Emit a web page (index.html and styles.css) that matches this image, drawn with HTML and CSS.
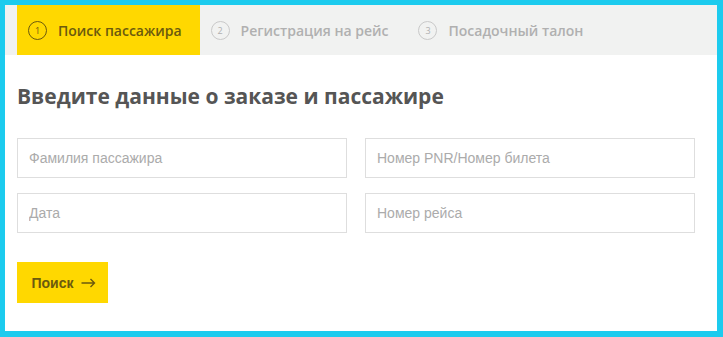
FILE: index.html
```html
<!DOCTYPE html>
<html lang="ru">
<head>
    <meta charset="UTF-8">
    <title>Регистрация на рейс</title>
    <link rel="stylesheet" href="styles.css">
</head>
<body>
    <div class="frame">
        <ul class="steps">
            <li class="step active"><span class="num">1</span>Поиск пассажира</li>
            <li class="step"><span class="num">2</span>Регистрация на рейс</li>
            <li class="step"><span class="num">3</span>Посадочный талон</li>
        </ul>
        <main class="content">
            <h1>Введите данные о заказе и пассажире</h1>
            <form class="search-form">
                <input type="text" placeholder="Фамилия пассажира">
                <input type="text" placeholder="Номер PNR/Номер билета">
                <input type="text" placeholder="Дата">
                <input type="text" placeholder="Номер рейса">
            </form>
            <button class="search-btn">Поиск
                <svg class="arrow" width="15" height="10" viewBox="0 0 15 10">
                    <path d="M0.5 5H13.5M9.5 1L13.5 5L9.5 9" fill="none" stroke="currentColor" stroke-width="1.4"/>
                </svg>
            </button>
        </main>
    </div>
</body>
</html>
```

FILE: styles.css
```css
html, body {
    margin: 0;
    padding: 0;
    height: 100%;
}

body {
    font-family: "Open Sans", sans-serif;
    background-color: #fff;
}

.frame {
    box-sizing: border-box;
    height: 337px;
    border: solid #1ccbee;
    border-width: 5px 6px 6px 5px;
    background-color: #fff;
}

.steps {
    list-style: none;
    margin: 0;
    padding: 0 0 0 12px;
    display: flex;
    height: 50px;
    background-color: #f1f2f1;
}

.step {
    display: flex;
    align-items: center;
    padding: 0 19px 0 11px;
    font-size: 14px;
    font-weight: 600;
    color: #b0b0b0;
}

.step.active {
    background-color: #ffd800;
    color: #6b5a0e;
    padding-right: 18px;
}

.num {
    box-sizing: border-box;
    width: 19px;
    height: 19px;
    border: 1px solid #c9c9c9;
    border-radius: 50%;
    display: flex;
    align-items: center;
    justify-content: center;
    font-size: 9px;
    font-weight: 400;
    margin-right: 11px;
    margin-top: 1px;
}

.step.active .num {
    border-color: #6b5a0e;
}

.content {
    padding: 26px 12px 0 12px;
}

h1 {
    margin: 0 0 27px 0;
    font-size: 21px;
    font-weight: 700;
    color: #555;
    line-height: 30px;
}

.search-form {
    display: grid;
    grid-template-columns: 330px 330px;
    column-gap: 18px;
    row-gap: 15px;
}

.search-form input {
    box-sizing: border-box;
    height: 40px;
    border: 1px solid #dedede;
    padding: 0 11px;
    font-family: "Liberation Sans", Arial, sans-serif;
    font-size: 14px;
    color: #333;
    outline: none;
}

.search-form input::placeholder {
    color: #ababab;
}

.search-btn {
    margin-top: 29px;
    width: 91px;
    height: 41px;
    border: none;
    background-color: #ffd800;
    color: #6b5a0e;
    font-family: "Liberation Sans", Arial, sans-serif;
    font-size: 14px;
    font-weight: bold;
    padding: 0 0 0 2px;
    display: flex;
    align-items: center;
    justify-content: center;
    cursor: pointer;
}

.arrow {
    margin-left: 7px;
}
```
